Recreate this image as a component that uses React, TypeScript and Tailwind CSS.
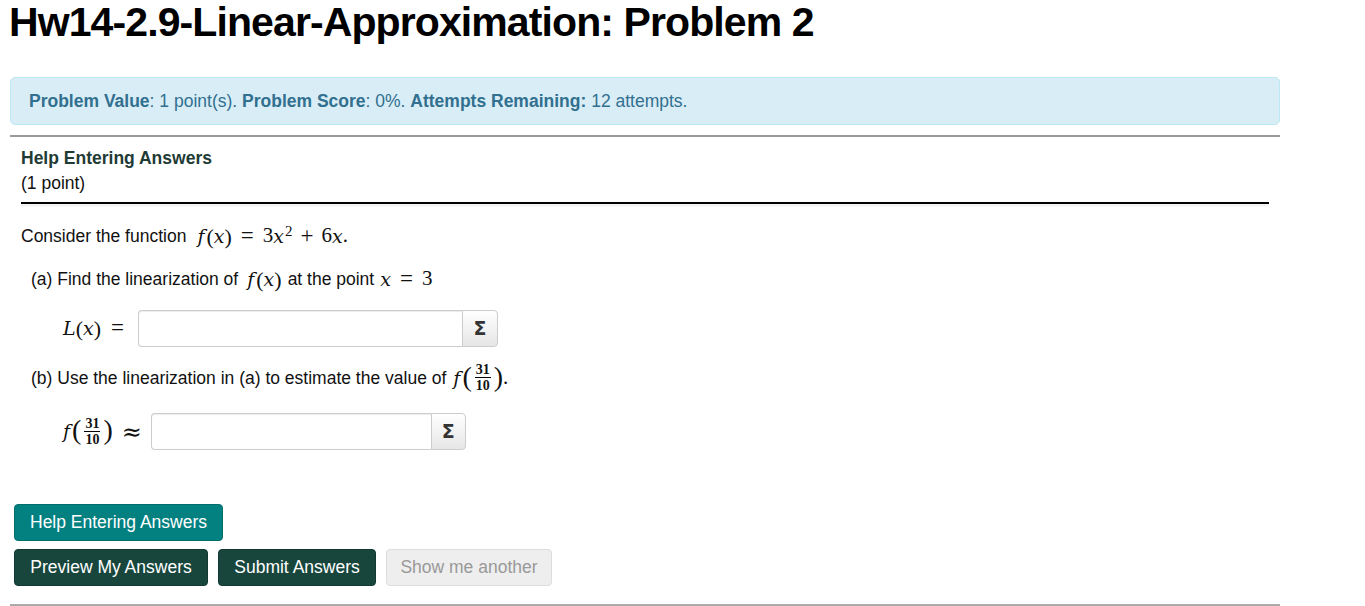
import React from 'react';

// MathJax-like pieces: italic variables, upright numbers, parens and operators
const V: React.FC<{ children: React.ReactNode; className?: string }> = ({ children, className = '' }) => (
  <span className={`italic font-['DejaVu_Serif',serif] text-[19px] ${className}`}>{children}</span>
);

const N: React.FC<{ children: React.ReactNode; className?: string }> = ({ children, className = '' }) => (
  <span className={`font-['Liberation_Serif',serif] text-[21px] ${className}`}>{children}</span>
);

const P: React.FC<{ children: React.ReactNode; className?: string }> = ({ children, className = '' }) => (
  <span className={`font-['Liberation_Serif',serif] text-[22px] ${className}`}>{children}</span>
);

const Op: React.FC<{ children: React.ReactNode; className?: string }> = ({ children, className = '' }) => (
  <span className={`font-['Liberation_Serif',serif] text-[23px] ${className}`}>{children}</span>
);

const Frac: React.FC<{ top: string; bottom: string }> = ({ top, bottom }) => (
  <span className="inline-flex flex-col items-center font-['Liberation_Serif',serif] text-[14px] font-bold leading-[12px] mx-[3px]">
    <span className="border-b border-black px-[1px] pb-[1px]">{top}</span>
    <span className="pt-[2px]">{bottom}</span>
  </span>
);

const FOfFrac: React.FC = () => (
  <span className="inline-flex items-center">
    <V className="mr-[2px]">f</V>
    <span className="font-['Liberation_Serif',serif] text-[28px] leading-none -mt-[3px]">(</span>
    <Frac top="31" bottom="10" />
    <span className="font-['Liberation_Serif',serif] text-[28px] leading-none -mt-[3px]">)</span>
  </span>
);

const FOfX: React.FC = () => (
  <>
    <V className="mr-[2px]">f</V>
    <P>(</P>
    <V>x</V>
    <P>)</P>
  </>
);

const AnswerBox: React.FC<{ width: string; btn: string }> = ({ width, btn }) => (
  <div className="flex h-[37px]">
    <div className={`${width} h-full border border-[#cccccc] border-r-0 rounded-l-[4px] bg-white shadow-[inset_0_1px_1px_rgba(0,0,0,0.075)]`} />
    <button className={`${btn} h-full border border-[#cccccc] rounded-r-[4px] bg-gradient-to-b from-[#ffffff] to-[#e6e6e6] flex items-center justify-center text-[#333] font-bold text-[19px] font-['DejaVu_Sans',sans-serif]`}>
      Σ
    </button>
  </div>
);

export default function App() {
  return (
    <div className="min-h-screen bg-white text-[#111] font-['Liberation_Sans',Arial,sans-serif] text-[17.5px]">
      <div className="w-[1270px] ml-[10px]">
        <h1 className="text-[41px] tracking-[-0.9px] font-bold leading-[44px] text-black -ml-[1px]">
          Hw14-2.9-Linear-Approximation: Problem 2
        </h1>

        <div className="mt-[33px] h-[48px] border border-[#bce8f1] bg-[#d9edf7] rounded-[5px] px-[18px] flex items-center text-[#31708f]">
          <p>
            <b>Problem Value</b>: 1 point(s). <b>Problem Score</b>: 0%. <b>Attempts Remaining:</b> 12 attempts.
          </p>
        </div>

        <div className="mt-[10px] h-[2px] bg-[#9a9a9a]" />

        <div className="px-[11px]">
          <div className="pt-[9px] leading-[25px]">
            <div className="font-bold text-[#1f3b35]">Help Entering Answers</div>
            <div>(1 point)</div>
          </div>
          <div className="mt-[6px] h-[2px] bg-black shadow-[0_2px_2px_rgba(0,0,0,0.08)]" />

          <p className="mt-[18px] h-[28px] flex items-center">
            <span className="mr-[11px]">Consider the function</span>
            <FOfX />
            <Op className="mx-[9px]">=</Op>
            <N>3</N>
            <V>x</V>
            <span className="font-['Liberation_Serif',serif] text-[15px] self-start -mt-[2px] ml-[1px]">2</span>
            <Op className="mx-[8px]">+</Op>
            <N>6</N>
            <V>x</V>
            <N>.</N>
          </p>

          <p className="mt-[15px] ml-[10px] h-[28px] flex items-center">
            <span className="mr-[9px]">(a) Find the linearization of</span>
            <FOfX />
            <span className="ml-[6px] mr-[6px]">at the point</span>
            <V>x</V>
            <Op className="mx-[9px]">=</Op>
            <N>3</N>
          </p>

          <div className="mt-[17px] ml-[42px] flex items-center">
            <span className="mr-[14px] flex items-center whitespace-nowrap">
              <V>L</V>
              <P>(</P>
              <V>x</V>
              <P>)</P>
              <Op className="ml-[10px]">=</Op>
            </span>
            <AnswerBox width="w-[324px]" btn="w-[36px]" />
          </div>

          <p className="mt-[17px] ml-[10px] h-[28px] flex items-center">
            <span className="mr-[7px]">(b) Use the linearization in (a) to estimate the value of</span>
            <FOfFrac />
            <N>.</N>
          </p>

          <div className="mt-[21px] ml-[42px] flex items-center">
            <span className="mr-[9px] flex items-center whitespace-nowrap">
              <FOfFrac />
              <span className="ml-[9px] font-['DejaVu_Serif',serif] text-[24px] leading-none">≈</span>
            </span>
            <AnswerBox width="w-[280px]" btn="w-[35px]" />
          </div>
        </div>

        <div className="mt-[54px] ml-[4px] flex flex-col gap-[8px]">
          <div>
            <button className="h-[37px] px-[15px] rounded-[4px] bg-[#038181] border border-[#036e6e] text-white">
              Help Entering Answers
            </button>
          </div>
          <div className="flex gap-[10px]">
            <button className="h-[37px] w-[194px] rounded-[4px] bg-[#18463d] border border-[#123a32] text-white">
              Preview My Answers
            </button>
            <button className="h-[37px] w-[158px] rounded-[4px] bg-[#18463d] border border-[#123a32] text-white">
              Submit Answers
            </button>
            <button className="h-[37px] w-[166px] rounded-[4px] bg-[#eeeeee] border border-[#dddddd] text-[#999999]">
              Show me another
            </button>
          </div>
        </div>

        <div className="mt-[18px] h-[2px] bg-[#aaaaaa]" />
      </div>
    </div>
  );
}
